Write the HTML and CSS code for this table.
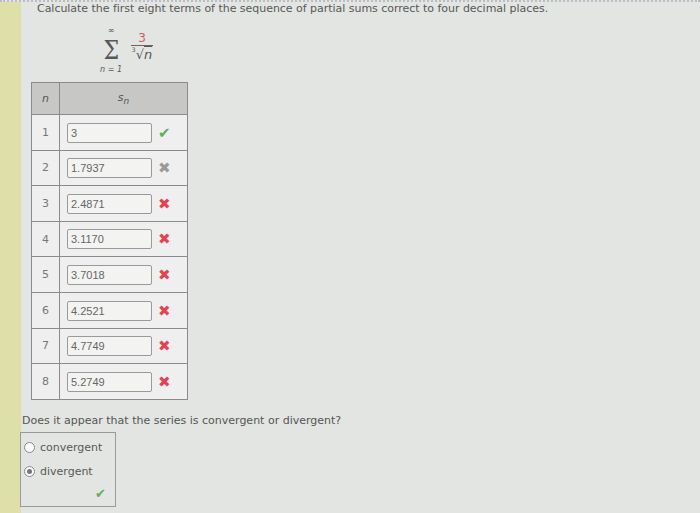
FILE: index.html
```html
<!DOCTYPE html>
<html>
<head>
<meta charset="utf-8">
<link rel="stylesheet" href="styles.css">
</head>
<body>
<div class="page">
  <div class="strip"></div>
  <div class="main">
    <div class="title">Calculate the first eight terms of the sequence of partial sums correct to four decimal places.</div>
    <div class="formula">
      <div class="sigma">
        <span class="inf">∞</span>
        <span class="sig">Σ</span>
        <span class="lim">n = 1</span>
      </div>
      <div class="frac">
        <span class="num">3</span>
        <span class="den"><span class="idx">3</span>√<span class="rad">n</span></span>
      </div>
    </div>
    <table class="tbl">
      <thead>
        <tr><th class="cn">n</th><th class="cs">s<sub>n</sub></th></tr>
      </thead>
      <tbody>
        <tr><td class="cn">1</td><td class="cs"><span class="inp">3</span><span class="mark ok">✔</span></td></tr>
        <tr><td class="cn">2</td><td class="cs"><span class="inp">1.7937</span><span class="mark grey">✖</span></td></tr>
        <tr><td class="cn">3</td><td class="cs"><span class="inp">2.4871</span><span class="mark bad">✖</span></td></tr>
        <tr><td class="cn">4</td><td class="cs"><span class="inp">3.1170</span><span class="mark bad">✖</span></td></tr>
        <tr><td class="cn">5</td><td class="cs"><span class="inp">3.7018</span><span class="mark bad">✖</span></td></tr>
        <tr><td class="cn">6</td><td class="cs"><span class="inp">4.2521</span><span class="mark bad">✖</span></td></tr>
        <tr><td class="cn">7</td><td class="cs"><span class="inp">4.7749</span><span class="mark bad">✖</span></td></tr>
        <tr><td class="cn">8</td><td class="cs"><span class="inp">5.2749</span><span class="mark bad">✖</span></td></tr>
      </tbody>
    </table>
    <div class="question">Does it appear that the series is convergent or divergent?</div>
    <div class="choices">
      <div class="opt"><span class="radio"></span>convergent</div>
      <div class="opt"><span class="radio on"></span>divergent</div>
      <div class="okrow"><span class="mark ok">✔</span></div>
    </div>
  </div>
</div>
</body>
</html>
```

FILE: styles.css
```css
html, body {
  margin: 0;
  padding: 0;
}
body {
  width: 700px;
  height: 513px;
  overflow: hidden;
  background: #e3e5e2;
  font-family: "DejaVu Sans", Verdana, sans-serif;
  color: #585858;
}
.page {
  display: flex;
  height: 513px;
  border-top: 2px dotted #b9bdc4;
  box-sizing: border-box;
}
.strip {
  width: 21px;
  background: #dde0a9;
  flex: none;
}
.main {
  flex: 1;
  padding-left: 16px;
}
.title {
  font-size: 11px;
  letter-spacing: -0.03px;
  margin-top: 0;
  line-height: 14px;
}
.formula {
  display: flex;
  align-items: flex-start;
  margin-left: 60px;
  margin-top: 11px;
  height: 55px;
}
.sigma {
  display: flex;
  flex-direction: column;
  align-items: center;
  width: 28px;
}
.inf {
  font-size: 8px;
  line-height: 8px;
  margin-bottom: 3px;
}
.sig {
  font-size: 26px;
  line-height: 25px;
  font-family: "DejaVu Serif", serif;
  transform: scaleX(0.85);
}
.lim {
  font-size: 8px;
  line-height: 10px;
  margin-top: 2px;
  white-space: nowrap;
  font-style: italic;
}
.frac {
  display: flex;
  flex-direction: column;
  align-items: center;
  margin-left: 6px;
  margin-top: 4px;
}
.num {
  color: #d45a5a;
  font-size: 12px;
  line-height: 14px;
  border-bottom: 1px solid #666;
  width: 22px;
  text-align: center;
}
.den {
  font-size: 13px;
  line-height: 17px;
}
.idx {
  font-size: 6px;
  vertical-align: top;
  line-height: 8px;
}
.rad {
  font-style: italic;
  text-decoration: overline;
}
.tbl {
  border-collapse: collapse;
  margin-left: -6px;
  margin-top: 0;
  background: #eeefee;
}
.tbl th, .tbl td {
  border: 1px solid #8b8b8b;
  padding: 0;
}
.tbl th {
  background: #c7c8c6;
  height: 31px;
  font-weight: normal;
  font-style: italic;
  font-size: 11px;
  color: #555;
  text-align: center;
}
.tbl td {
  height: 34.6px;
}
.tbl th.cs sub {
  font-size: 9px;
}
.cn {
  width: 27px;
  text-align: center;
  font-size: 11px;
  color: #777;
}
.cs {
  width: 120px;
}
td.cs {
  padding-left: 7px !important;
  white-space: nowrap;
  text-align: left;
}
.inp {
  display: inline-block;
  vertical-align: middle;
  width: 80px;
  height: 18px;
  border: 1px solid #9a9a9a;
  border-radius: 2px;
  background: #f3f3f2;
  font-family: "Liberation Sans", Arial, sans-serif;
  font-size: 11px;
  line-height: 18px;
  padding-left: 3px;
  color: #666;
}
.mark {
  display: inline-block;
  vertical-align: middle;
  margin-left: 6px;
  font-size: 15px;
  font-family: "DejaVu Sans", sans-serif;
}
.ok { color: #5daf5a; }
.bad { color: #e2444e; font-weight: bold; }
.grey { color: #9a9a9a; }
.question {
  margin-left: -15px;
  margin-top: 14px;
  font-size: 11px;
  line-height: 14px;
  color: #555;
}
.choices {
  margin-left: -17px;
  margin-top: 4px;
  width: 96px;
  height: 75px;
  border: 1px solid #9a9a9a;
  box-sizing: border-box;
  padding: 6px 3px;
  font-size: 11px;
}
.opt {
  display: flex;
  align-items: center;
  height: 18px;
  margin-bottom: 6px;
}
.radio {
  width: 9px;
  height: 9px;
  border: 1px solid #888;
  border-radius: 50%;
  background: #fafafa;
  margin-right: 5px;
  box-sizing: content-box;
  position: relative;
}
.radio.on::after {
  content: "";
  position: absolute;
  left: 2px;
  top: 2px;
  width: 5px;
  height: 5px;
  border-radius: 50%;
  background: #777;
}
.okrow {
  display: flex;
  justify-content: flex-end;
  margin-top: -1px;
  padding-right: 6px;
}
.okrow .mark {
  margin-left: 0;
  font-size: 13px;
}
```
